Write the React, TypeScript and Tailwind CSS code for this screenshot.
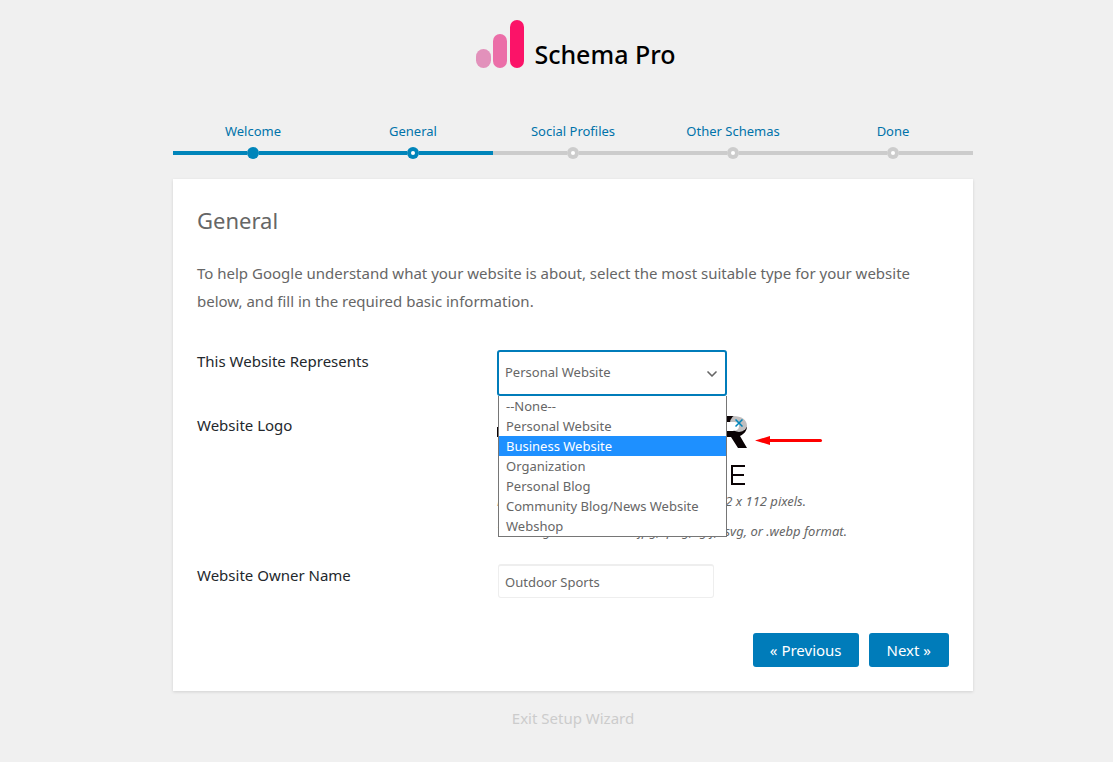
import { useState } from 'react';
import { ChevronDown } from 'lucide-react';

const steps = [
  { label: 'Welcome', state: 'done' },
  { label: 'General', state: 'active' },
  { label: 'Social Profiles', state: 'todo' },
  { label: 'Other Schemas', state: 'todo' },
  { label: 'Done', state: 'todo' },
];

const types = [
  '--None--',
  'Personal Website',
  'Business Website',
  'Organization',
  'Personal Blog',
  'Community Blog/News Website',
  'Webshop',
];

function Brand() {
  return (
    <h1 className="flex items-end justify-center gap-2.5 pl-1.5">
      <svg width="48" height="48" viewBox="0 0 48 48" aria-hidden="true">
        <rect x="0" y="29" width="15" height="19" rx="7.5" fill="#e291bb" />
        <rect x="17" y="14" width="14" height="34" rx="7" fill="#eb6ea8" />
        <rect x="34" y="0" width="14" height="48" rx="7" fill="#fb1368" />
      </svg>
      <span className="text-[25px] leading-7 font-medium text-black">Schema Pro</span>
    </h1>
  );
}

function Steps() {
  return (
    <ol className="mt-[52px] grid grid-cols-5 text-center text-[13px] leading-[22px] text-[#0073aa]">
      {steps.map((s) => (
        <li key={s.label}>
          <a href="#step">{s.label}</a>
          <div
            className={
              'mt-[5px] flex h-3 items-center justify-center ' +
              (s.state === 'todo' ? 'text-[#cccccc]' : 'text-[#0085ba]')
            }
          >
            <span className="h-1 flex-1 bg-current" />
            <span className="flex size-3 items-center justify-center rounded-full bg-current">
              {s.state !== 'done' && <span className="size-1 rounded-full bg-white" />}
            </span>
            <span className="h-1 flex-1 bg-current" />
          </div>
        </li>
      ))}
    </ol>
  );
}

function LogoPreview() {
  return (
    <div className="relative h-[72px] w-[250px]">
      <svg width="250" height="72" viewBox="0 0 250 72" role="img" aria-label="Website logo">
        <rect x="0" y="13" width="3" height="10" fill="#0a0204" />
        <path
          d="M217 2h19c9 0 14 4 14 10c0 5-3 8-7 10l7 12h-9l-7-11h-17v-6h17c5 0 8-1 8-5s-3-4-8-4h-17z"
          fill="#0a0204"
        />
        <path d="M234 51h14v2h-12v7h11v2h-11v7h12v2h-14z" fill="#0a0204" />
      </svg>
      <button
        type="button"
        aria-label="Remove logo"
        className="absolute top-0 -right-px flex size-[18px] items-center justify-center rounded-full bg-white/75 text-[#0085ba]"
      >
        <svg width="8" height="8" viewBox="0 0 8 8" stroke="currentColor" strokeWidth="1.5">
          <path d="M0.500 0.500l7 7M7.500 0.500l-7 7" />
        </svg>
      </button>
      <svg className="absolute top-[21px] left-[258px]" width="68" height="10" viewBox="0 0 68 10" aria-hidden="true">
        <path d="M0 5.500L15 1v9z" fill="#fe0000" />
        <path d="M13 5.500H65.500" stroke="#fe0000" strokeWidth="3" strokeLinecap="round" />
      </svg>
    </div>
  );
}

export default function App() {
  const [type, setType] = useState('Personal Website');
  const [owner, setOwner] = useState('Outdoor Sports');
  return (
    <div className="min-h-screen bg-[#f0f0f0] pt-5 pl-[33px] font-['Noto_Sans','Open_Sans',sans-serif] text-[#666666]">
      <div className="mx-auto max-w-[800px]">
        <Brand />
        <Steps />
        <main className="mt-5 bg-white p-6 shadow-[0_1px_3px_rgba(0,0,0,0.13)]">
          <h2 className="text-[22px] leading-[34px]">General</h2>
          <p className="mt-[22px] text-[15px] leading-7">
            To help Google understand what your website is about, select the most suitable type for your website below,
            and fill in the required basic information.
          </p>
          <form className="mt-[35px]" onSubmit={(e) => e.preventDefault()}>
            <div className="grid grid-cols-[300px_1fr]">
              <label htmlFor="type" className="text-[15px] leading-[22px] text-[#23282d]">
                This Website Represents
              </label>
              <div className="relative h-[46px] w-[230px]">
                <select
                  id="type"
                  value={type}
                  onChange={(e) => setType(e.target.value)}
                  className="size-full appearance-none rounded-[3px] border-2 border-[#007cba] bg-white px-[6px] text-[13px]"
                >
                  {types.map((t) => (
                    <option key={t}>{t}</option>
                  ))}
                </select>
                <ChevronDown className="pointer-events-none absolute top-4 right-[7px] size-4" strokeWidth={2.5} />
                <ul
                  role="listbox"
                  className="absolute top-full right-0 left-px z-10 border border-t-0 border-[#767676] bg-white text-[13px] leading-5"
                >
                  {types.map((t) => (
                    <li
                      key={t}
                      role="option"
                      aria-selected={t === 'Business Website'}
                      onClick={() => setType(t)}
                      className="px-[7px] aria-selected:bg-[#1e90ff] aria-selected:text-white"
                    >
                      {t}
                    </li>
                  ))}
                </ul>
              </div>
            </div>
            <div className="mt-[18px] grid grid-cols-[300px_1fr]">
              <span className="text-[15px] leading-[22px] text-[#23282d]">Website Logo</span>
              <div>
                <LogoPreview />
                <p className="text-[13px] leading-[30px] italic">Recommended minimum logo size is 112 x 112 pixels.</p>
                <p className="text-[13px] leading-[30px] italic">
                  The image must be in a .jpg, .png, .gif, .svg, or .webp format.
                </p>
              </div>
            </div>
            <div className="mt-[18px] grid grid-cols-[300px_1fr]">
              <label htmlFor="owner" className="text-[15px] leading-[22px] text-[#23282d]">
                Website Owner Name
              </label>
              <input
                id="owner"
                value={owner}
                onChange={(e) => setOwner(e.target.value)}
                className="ml-px h-[34px] w-[216px] rounded-[3px] border border-t-2 border-[#eeeeee] px-[6px] text-[13px]"
              />
            </div>
            <div className="mt-[35px] flex justify-end gap-2.5 text-[15px] text-white">
              <button type="button" className="h-[34px] rounded-[3px] bg-[#007cba] px-[17px]">
                « Previous
              </button>
              <button type="submit" className="h-[34px] rounded-[3px] bg-[#007cba] px-[18px]">
                Next »
              </button>
            </div>
          </form>
        </main>
        <footer className="mt-4 text-center text-[15px] leading-[22px] text-[#cccccc]">
          <a href="#exit">Exit Setup Wizard</a>
        </footer>
      </div>
    </div>
  );
}
